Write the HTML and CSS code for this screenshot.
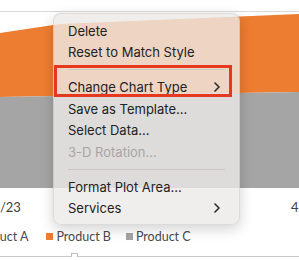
FILE: index.html
```html
<!DOCTYPE html>
<html lang="en">
<head>
    <meta charset="UTF-8">
    <title>Chart context menu</title>
    <link rel="stylesheet" href="styles.css">
</head>
<body>
    <div class="chart">
        <svg class="plot" width="299" height="190" viewBox="0 0 299 190">
            <line x1="0" y1="11.5" x2="299" y2="11.5" stroke="#d9d9d9" stroke-width="1"/>
            <polygon points="0,33 60,24 299,14 299,92 0,97" fill="#ed7d31"/>
            <polygon points="0,97 299,92 299,188 0,188" fill="#a5a5a5"/>
        </svg>
        <div class="axis">
            <span>1/1/23</span>
            <span>4/1/23</span>
        </div>
        <div class="legend">
            <span class="key first"><i class="swatch blue"></i>Product A</span>
            <span class="key"><i class="swatch orange"></i>Product B</span>
            <span class="key"><i class="swatch gray"></i>Product C</span>
        </div>
        <div class="frame-edge"><span class="handle"></span></div>
    </div>

    <div class="menu">
        <div class="item">Delete</div>
        <div class="item">Reset to Match Style</div>
        <div class="sep"></div>
        <div class="item">Change Chart Type
            <svg class="chev" width="6" height="10" viewBox="0 0 6 10"><path d="M1 1l4 4-4 4" fill="none" stroke="#2a2a2a" stroke-width="1.6" stroke-linecap="round" stroke-linejoin="round"/></svg>
        </div>
        <div class="item">Save as Template...</div>
        <div class="item">Select Data...</div>
        <div class="item disabled">3-D Rotation...</div>
        <div class="sep"></div>
        <div class="item">Format Plot Area...</div>
        <div class="item">Services
            <svg class="chev" width="6" height="10" viewBox="0 0 6 10"><path d="M1 1l4 4-4 4" fill="none" stroke="#2a2a2a" stroke-width="1.6" stroke-linecap="round" stroke-linejoin="round"/></svg>
        </div>
    </div>
    <div class="highlight"></div>
</body>
</html>
```

FILE: styles.css
```css
body {
    margin: 0;
    width: 299px;
    height: 260px;
    overflow: hidden;
    background-color: white;
    font-family: Inter, "Liberation Sans", sans-serif;
    position: relative;
}
.chart {
    width: 299px;
    overflow: hidden;
}
.plot {
    display: block;
}
/* axis + legend */
.axis {
    display: flex;
    justify-content: space-between;
    margin: 9px -34px 0 -21px;
    font-family: Lato, "Liberation Sans", sans-serif;
    font-size: 13px;
    color: #404040;
    height: 16px;
}
.legend {
    display: flex;
    gap: 15px;
    margin: 14px 0 0 -36px;
    font-family: Lato, "Liberation Sans", sans-serif;
    font-size: 12.5px;
    color: #4a4a4a;
    white-space: nowrap;
}
.key {
    display: flex;
    align-items: center;
}
.key.first {
    margin-right: 3px;
}
.swatch {
    width: 7px;
    height: 7px;
    margin-right: 3px;
}
.swatch.blue { background-color: #4472c4; }
.swatch.orange { background-color: #ed7d31; }
.swatch.gray { background-color: #a5a5a5; }
.frame-edge {
    position: relative;
    margin-top: 12px;
    border-top: 1px solid #c9c9c9;
}
.handle {
    position: absolute;
    left: 71px;
    top: -4px;
    width: 5px;
    height: 5px;
    background-color: white;
    border: 1px solid #bdbdbd;
}

/* context menu */
.menu {
    position: absolute;
    left: 53px;
    top: 13px;
    width: 173px;
    padding: 6px 6px 5px 6px;
    background-color: rgba(236, 234, 232, 0.8);
    border: 1px solid rgba(0, 0, 0, 0.08);
    border-radius: 8px;
    box-shadow: 0 4px 14px rgba(0, 0, 0, 0.18);
    font-size: 13px;
    color: #222;
}
.item {
    display: flex;
    justify-content: space-between;
    align-items: center;
    height: 21.5px;
    padding: 0 13px 0 8px;
}
.item.disabled {
    color: #a9a5a1;
}
.sep {
    height: 1px;
    margin: 6px 8px 6.5px 8px;
    background-color: #cbc7c3;
}
.highlight {
    position: absolute;
    left: 54px;
    top: 65px;
    width: 172px;
    height: 26px;
    border: 3px solid #e5381e;
}
```
